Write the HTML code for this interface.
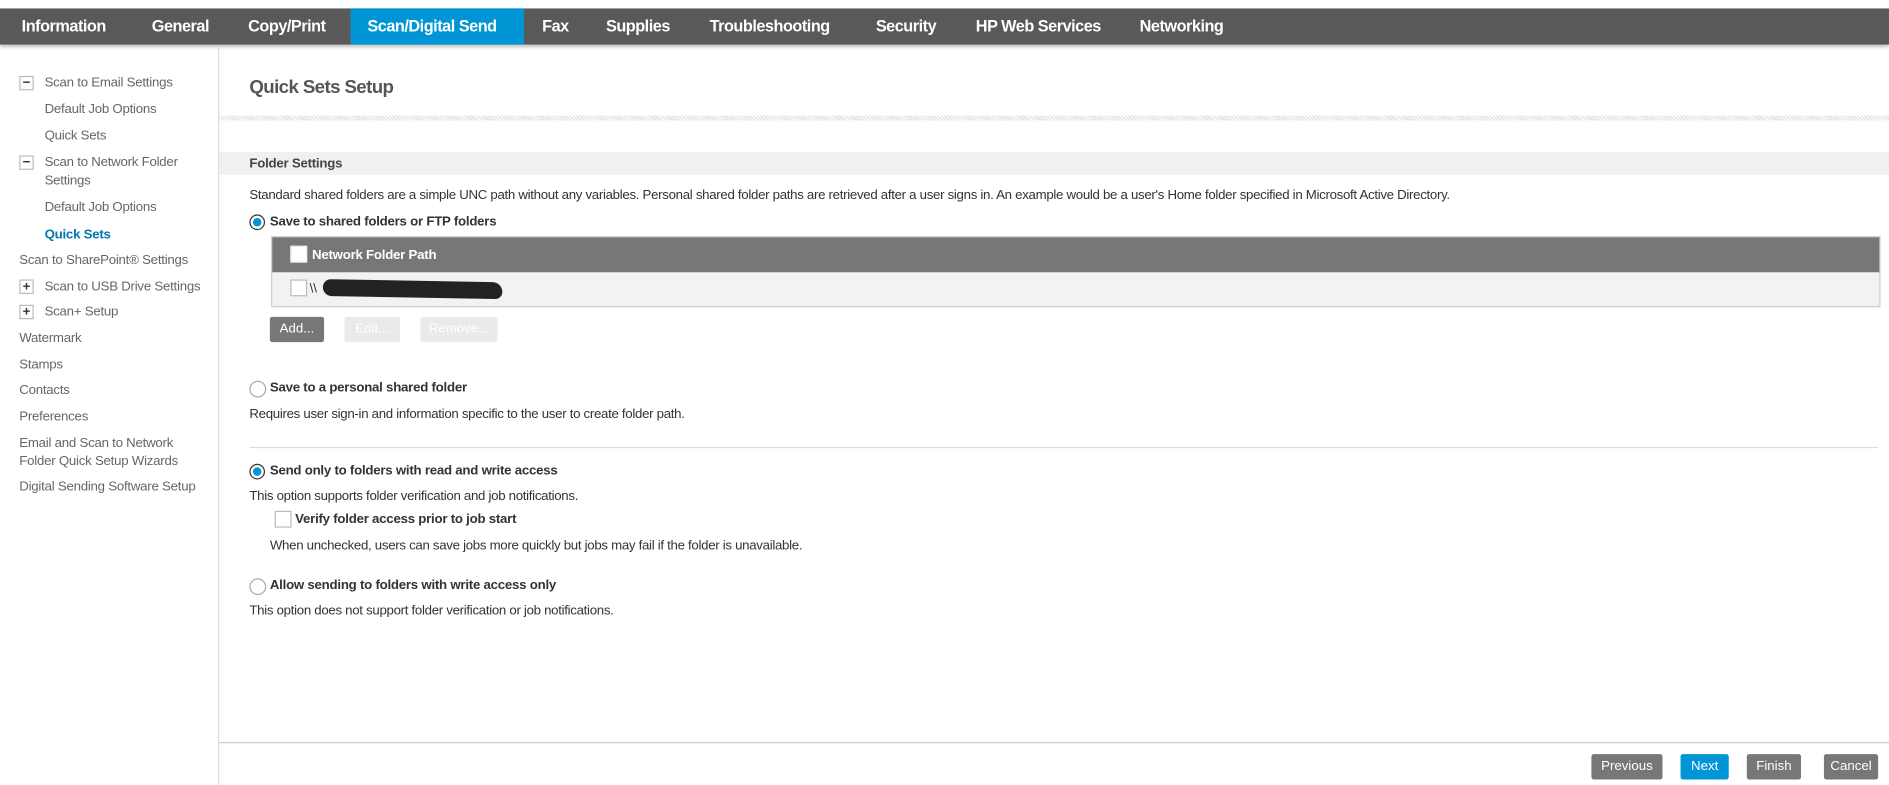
<!DOCTYPE html>
<html><head><meta charset="utf-8"><style>
html,body{margin:0;padding:0;background:#fff;overflow:hidden;width:1889px;height:785px}
#w{position:absolute;left:0;top:0;width:1568px;height:652px;transform:scale(1.2047);transform-origin:0 0;font-family:"Liberation Sans",sans-serif;font-size:11px;color:#333}
.a{position:absolute;white-space:nowrap;line-height:14px}
.nav{position:absolute;left:0;top:7px;width:1568px;height:30px;background:#595959;box-shadow:0 2px 3px rgba(0,0,0,.25)}
.n{position:absolute;top:0;line-height:30px;color:#fff;font-weight:bold;font-size:13.5px;letter-spacing:-.4px}
.s{color:#666;font-size:11px;letter-spacing:-.2px}
.box{position:absolute;width:10px;height:10px;border:1px solid #bbb;background:#fff;font-size:11px;line-height:10px;text-align:center;color:#333;font-weight:bold}
.b{font-weight:bold;color:#333;letter-spacing:-.2px}
.radio{position:absolute;width:12px;height:12px;border:1px solid #aaa;border-radius:50%;background:#fff}
.radio.on{border:1.5px solid #333;width:11px;height:11px}
.radio.on:after{content:"";position:absolute;left:2px;top:2px;width:7px;height:7px;border-radius:50%;background:#0096d6}
.btn{position:absolute;height:21px;line-height:21px;color:#fff;text-align:center;font-size:11px;border-radius:2px}
.cb{position:absolute;width:12px;height:12px;border:1px solid #bbb;background:#fff}
.t{letter-spacing:-.25px}
</style></head><body><div id="w">
<div class="nav">
<div style="position:absolute;left:291px;top:0;width:144px;height:30px;background:#0096d6"></div>
<div class="n" style="left:18px">Information</div>
<div class="n" style="left:126px">General</div>
<div class="n" style="left:206px">Copy/Print</div>
<div class="n" style="left:305px">Scan/Digital Send</div>
<div class="n" style="left:450px">Fax</div>
<div class="n" style="left:503px">Supplies</div>
<div class="n" style="left:589px">Troubleshooting</div>
<div class="n" style="left:727px">Security</div>
<div class="n" style="left:810px">HP Web Services</div>
<div class="n" style="left:946px">Networking</div>
</div>
<div style="position:absolute;left:181px;top:40px;width:1px;height:612px;background:#ddd"></div>
<div class="box" style="left:16px;top:63px">−</div>
<div class="a s" style="left:37px;top:62px">Scan to Email Settings</div>
<div class="a s" style="left:37px;top:84px">Default Job Options</div>
<div class="a s" style="left:37px;top:106px">Quick Sets</div>
<div class="box" style="left:16px;top:129px">−</div>
<div class="a s" style="left:37px;top:128px">Scan to Network Folder</div>
<div class="a s" style="left:37px;top:143px">Settings</div>
<div class="a s" style="left:37px;top:165px">Default Job Options</div>
<div class="a s" style="left:37px;top:188px;color:#0077b3;font-weight:bold">Quick Sets</div>
<div class="a s" style="left:16px;top:209px">Scan to SharePoint® Settings</div>
<div class="box" style="left:16px;top:232px">+</div>
<div class="a s" style="left:37px;top:231px">Scan to USB Drive Settings</div>
<div class="box" style="left:16px;top:253px">+</div>
<div class="a s" style="left:37px;top:252px">Scan+ Setup</div>
<div class="a s" style="left:16px;top:274px">Watermark</div>
<div class="a s" style="left:16px;top:296px">Stamps</div>
<div class="a s" style="left:16px;top:317px">Contacts</div>
<div class="a s" style="left:16px;top:339px">Preferences</div>
<div class="a s" style="left:16px;top:361px">Email and Scan to Network</div>
<div class="a s" style="left:16px;top:376px">Folder Quick Setup Wizards</div>
<div class="a s" style="left:16px;top:397px">Digital Sending Software Setup</div>

<div class="a" style="left:207px;top:63px;font-size:15.5px;line-height:20px;font-weight:bold;color:#555;letter-spacing:-.5px">Quick Sets Setup</div>
<div style="position:absolute;left:182px;top:96px;width:1386px;height:4px;background:repeating-linear-gradient(45deg,#ddd 0 1px,#fff 1px 2px)"></div>
<div style="position:absolute;left:182px;top:126px;width:1386px;height:19px;background:#f0f0f0"></div>
<div class="a b" style="left:207px;top:129px;font-size:11px;color:#444">Folder Settings</div>
<div class="a t" style="left:207px;top:155px">Standard shared folders are a simple UNC path without any variables. Personal shared folder paths are retrieved after a user signs in. An example would be a user's Home folder specified in Microsoft Active Directory.</div>
<div class="radio on" style="left:207px;top:178px"></div>
<div class="a b" style="left:224px;top:177px">Save to shared folders or FTP folders</div>
<div style="position:absolute;left:225px;top:196px;width:1334px;height:57px;border:1px solid #ccc;background:#f2f2f2"></div>
<div style="position:absolute;left:226px;top:197px;width:1334px;height:29px;background:#777"></div>
<div class="cb" style="left:241px;top:204px;border-color:#eee"></div>
<div class="a b" style="left:259px;top:205px;color:#fff">Network Folder Path</div>
<div class="cb" style="left:241px;top:232px"></div>
<div class="a" style="left:257px;top:233px">\\</div>
<div style="position:absolute;left:268px;top:233px;width:149px;height:14px;background:#222;border-radius:8px 10px 7px 9px;transform:rotate(1deg)"></div>
<div class="btn" style="left:224px;top:263px;width:45px;background:#777">Add...</div>
<div class="btn" style="left:286px;top:263px;width:46px;background:#e8eaeb;color:#fff">Edit...</div>
<div class="btn" style="left:349px;top:263px;width:64px;background:#e8eaeb;color:#fff">Remove...</div>
<div class="radio" style="left:207px;top:316px"></div>
<div class="a b" style="left:224px;top:315px">Save to a personal shared folder</div>
<div class="a t" style="left:207px;top:337px">Requires user sign-in and information specific to the user to create folder path.</div>
<div style="position:absolute;left:207px;top:371px;width:1352px;height:1px;background:#ddd"></div>
<div class="radio on" style="left:207px;top:385px"></div>
<div class="a b" style="left:224px;top:384px">Send only to folders with read and write access</div>
<div class="a t" style="left:207px;top:405px">This option supports folder verification and job notifications.</div>
<div class="cb" style="left:228px;top:424px"></div>
<div class="a b" style="left:245px;top:424px">Verify folder access prior to job start</div>
<div class="a t" style="left:224px;top:446px">When unchecked, users can save jobs more quickly but jobs may fail if the folder is unavailable.</div>
<div class="radio" style="left:207px;top:480px"></div>
<div class="a b" style="left:224px;top:479px">Allow sending to folders with write access only</div>
<div class="a t" style="left:207px;top:500px">This option does not support folder verification or job notifications.</div>
<div style="position:absolute;left:182px;top:616px;width:1386px;height:1px;background:#ccc"></div>
<div class="btn" style="left:1321px;top:626px;width:59px;background:#777">Previous</div>
<div class="btn" style="left:1395px;top:626px;width:40px;background:#0096d6">Next</div>
<div class="btn" style="left:1450px;top:626px;width:45px;background:#777">Finish</div>
<div class="btn" style="left:1514px;top:626px;width:45px;background:#777">Cancel</div>
</div></body></html>
